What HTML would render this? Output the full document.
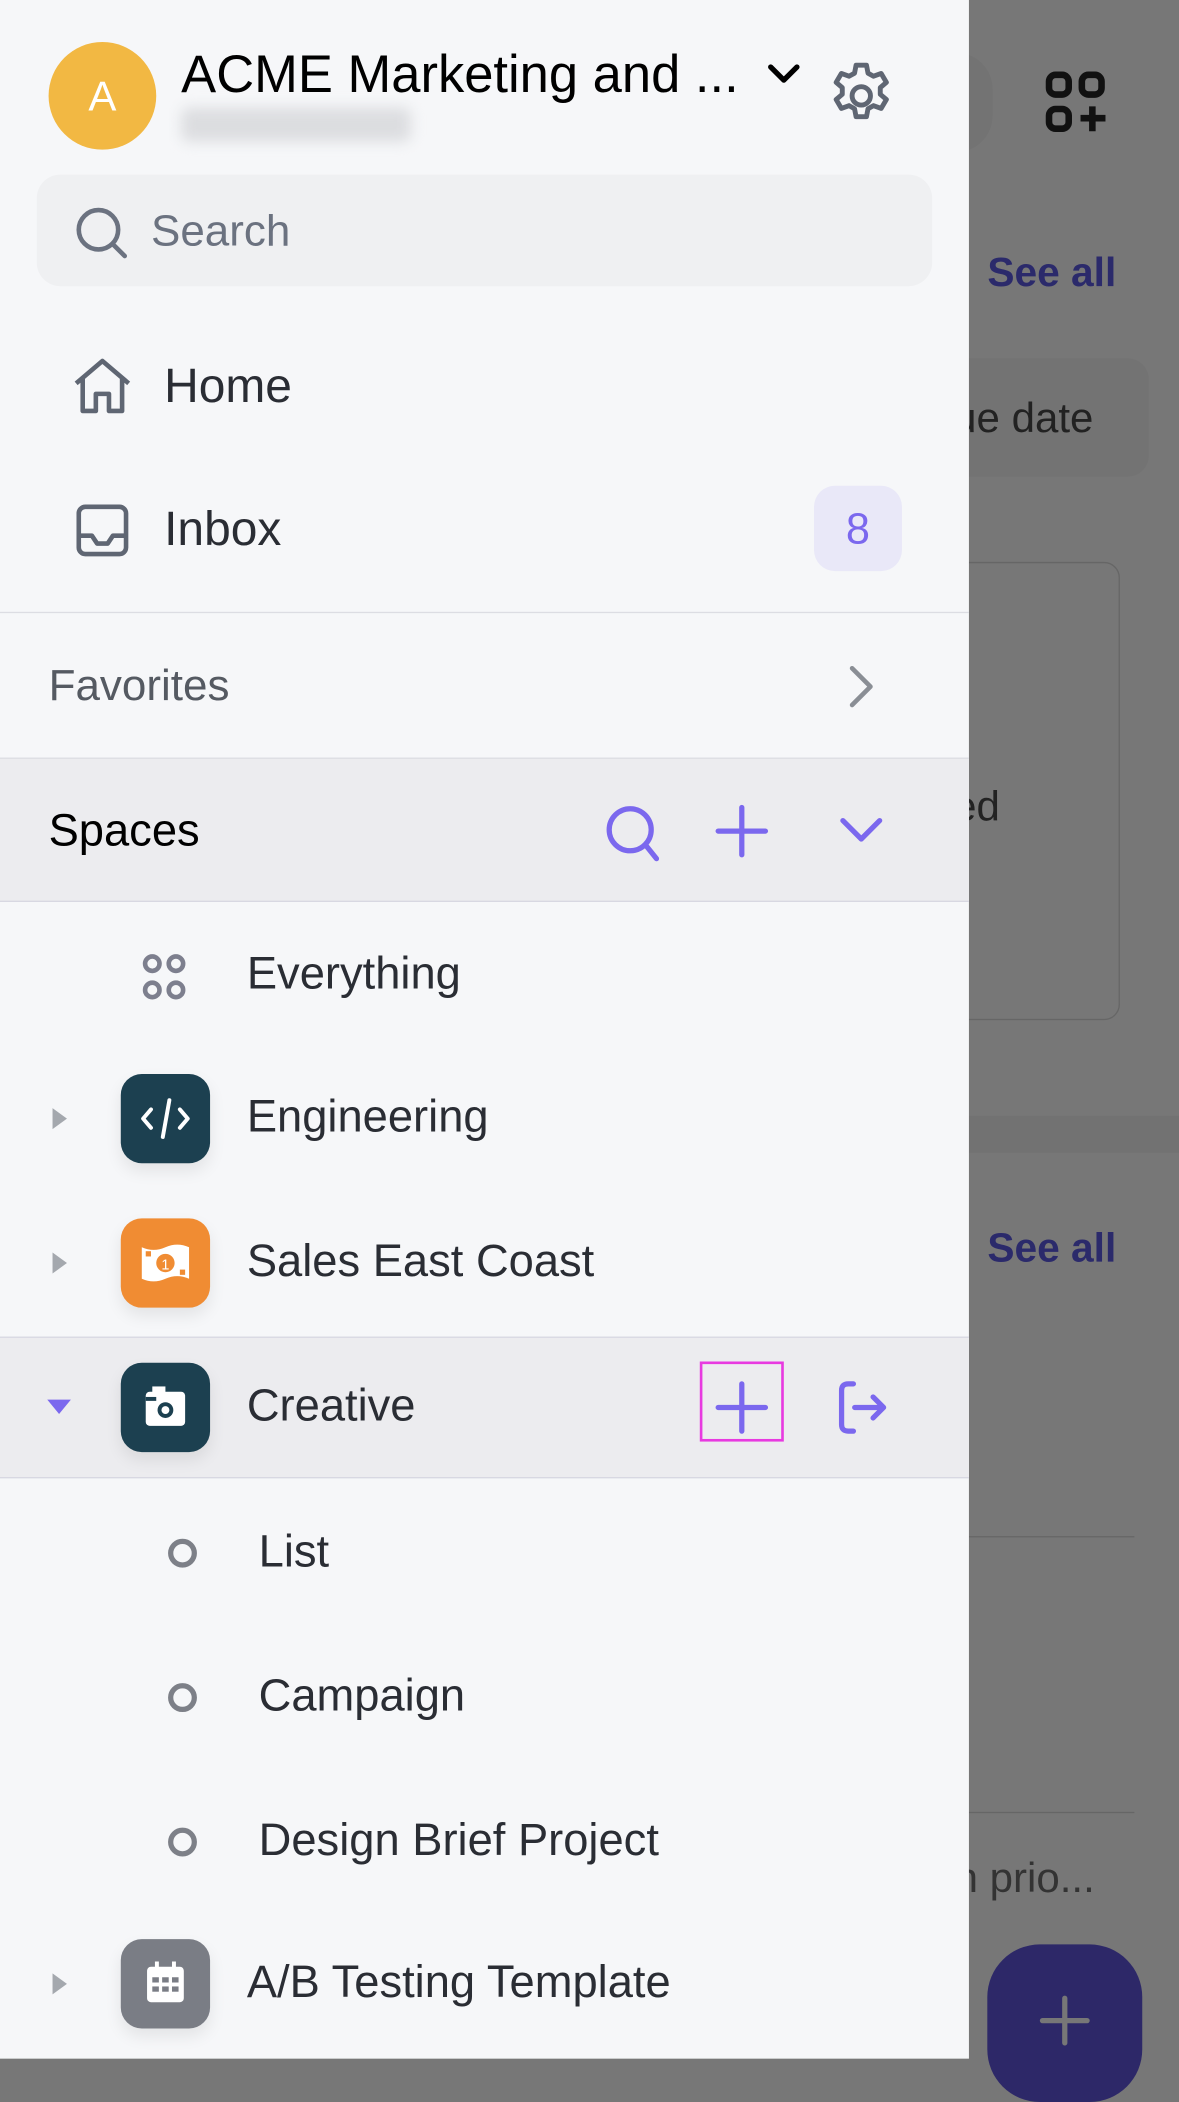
<!DOCTYPE html>
<html><head><meta charset="utf-8"><style>
html,body{margin:0;padding:0;width:1179px;height:2058px;overflow:hidden;background:#777}
#w{position:absolute;left:0;top:0;width:898px;height:1568px;transform:scale(1.31292);transform-origin:0 0;font-family:"Liberation Sans",sans-serif;}
.a{position:absolute}
.t{position:absolute;white-space:nowrap;color:#2a2d34;font-size:34.5px;line-height:1}
#d{position:absolute;left:0;top:0;width:738px;height:1568px;background:#f6f7f9}
.hl{position:absolute;left:0;width:738px;height:1px;background:#dcdde3}
.ib{position:absolute;width:68px;height:68px;border-radius:16px;box-shadow:0 6px 12px rgba(0,0,0,.08)}
.tri{position:absolute;width:0;height:0;border-top:8px solid transparent;border-bottom:8px solid transparent;border-left:11px solid #a4a8ae}
.dot{position:absolute;width:14px;height:14px;border:4px solid #7d8088;border-radius:50%}
</style></head><body><div id="w">
<div class="a" style="left:700px;top:40px;width:56px;height:76px;border-radius:38px;background:#737373"></div>
<svg class="a" style="left:796px;top:54px" width="50" height="48" viewBox="0 0 50 48" fill="none" stroke="#111" stroke-width="5"><rect x="3" y="3" width="15" height="15" rx="5"/><rect x="28" y="3" width="15" height="15" rx="5"/><rect x="3" y="29" width="15" height="15" rx="5"/><path d="M36 27v19M27 36h19"/></svg>
<div class="t" style="left:752px;top:192px;color:#2b2a6b;font-weight:bold;font-size:31px">See all</div>
<div class="a" style="left:700px;top:273px;width:175px;height:90px;border-radius:16px;background:#737373"></div>
<div class="t" style="left:726px;top:302px;color:#222;font-size:32px">ue date</div>
<div class="a" style="left:700px;top:428px;width:151px;height:347px;border-radius:12px;border:1.5px solid #666"></div>
<div class="t" style="left:726px;top:598px;color:#222;font-size:32px">ed</div>
<div class="a" style="left:738px;top:850px;width:160px;height:28px;background:#727272"></div>
<div class="t" style="left:752px;top:935px;color:#2b2a6b;font-weight:bold;font-size:31px">See all</div>
<div class="a" style="left:738px;top:1170px;width:126px;height:1px;background:#666"></div>
<div class="a" style="left:738px;top:1380px;width:126px;height:1px;background:#666"></div>
<div class="t" style="left:720px;top:1414px;color:#333;font-size:32px">in prio...</div>
<div class="a" style="left:752px;top:1481px;width:118px;height:120px;border-radius:40px;background:#2d2868"></div>
<svg class="a" style="left:790px;top:1518px" width="42" height="42" viewBox="0 0 42 42" stroke="#777" stroke-width="4" stroke-linecap="round"><path d="M21 4v34M4 21h34"/></svg>

<div id="d">
<div class="a" style="left:37px;top:32px;width:82px;height:82px;border-radius:50%;background:#f2b843;color:#fff;font-size:32px;text-align:center;line-height:82px">A</div>
<div class="t" style="left:138px;top:37px;color:#000;font-size:40px">ACME Marketing and ...</div>
<svg class="a" style="left:583px;top:46px" width="28" height="20" viewBox="0 0 28 20" fill="none" stroke="#000" stroke-width="4" stroke-linecap="round" stroke-linejoin="round"><path d="M4 5l10 10 10-10"/></svg>
<svg class="a" style="left:628px;top:45px" width="56" height="56" viewBox="0 0 24 24" fill="none" stroke="#5f6673" stroke-width="1.6" stroke-linejoin="round"><path d="M10.3 2h3.4l.5 2.6 1.8 1 2.5-.9 1.7 2.9-2 1.7v2.2l2 1.7-1.7 2.9-2.5-.9-1.8 1-.5 2.6h-3.4l-.5-2.6-1.8-1-2.5.9-1.7-2.9 2-1.7v-2.2l-2-1.7 1.7-2.9 2.5.9 1.8-1z"/><circle cx="12" cy="12" r="3"/></svg>
<div class="a" style="left:138px;top:82px;width:175px;height:26px;background:#dcdde0;filter:blur(5px);border-radius:6px"></div>

<div class="a" style="left:28px;top:133px;width:682px;height:85px;border-radius:18px;background:#eff0f2"></div>
<svg class="a" style="left:56px;top:156px" width="44" height="44" viewBox="0 0 44 44" fill="none" stroke="#6b7280" stroke-width="3.5" stroke-linecap="round"><circle cx="19" cy="19" r="15"/><path d="M30 30l9 9"/></svg>
<div class="t" style="left:115px;top:160px;color:#6b7280;font-size:33.5px">Search</div>

<svg class="a" style="left:55px;top:272px" width="46" height="44" viewBox="0 0 46 44" fill="none" stroke="#5f6673" stroke-width="3.5" stroke-linejoin="round"><path d="M3 20L23 3l20 17M8 16v25h10V28h10v13h10V16"/></svg>
<div class="t" style="left:125px;top:276px;font-size:36.5px">Home</div>
<svg class="a" style="left:58px;top:384px" width="40" height="40" viewBox="0 0 40 40" fill="none" stroke="#5f6673" stroke-width="3.5" stroke-linejoin="round"><rect x="2" y="2" width="36" height="36" rx="5"/><path d="M2 24h10l4 6h8l4-6h10"/></svg>
<div class="t" style="left:125px;top:385px;font-size:36.5px">Inbox</div>
<div class="a" style="left:620px;top:370px;width:67px;height:65px;border-radius:16px;background:#e9e8f8;color:#7b68ee;font-size:33px;text-align:center;line-height:65px">8</div>

<div class="hl" style="top:466px"></div>
<div class="t" style="left:37px;top:506px;color:#555a62;font-size:33.5px">Favorites</div>
<svg class="a" style="left:644px;top:505px" width="24" height="36" viewBox="0 0 24 36" fill="none" stroke="#8a8e95" stroke-width="3.5" stroke-linecap="round" stroke-linejoin="round"><path d="M5 4l14 14L5 32"/></svg>

<div class="a" style="left:0;top:577px;width:738px;height:110px;background:#ececef;border-top:1px solid #dcdde3;border-bottom:1px solid #d8d8e2;box-sizing:border-box"></div>
<div class="t" style="left:37px;top:616px;color:#000;font-size:34.5px">Spaces</div>
<svg class="a" style="left:460px;top:612px" width="46" height="46" viewBox="0 0 46 46" fill="none" stroke="#7b68ee" stroke-width="4" stroke-linecap="round"><circle cx="20" cy="20" r="16"/><path d="M32 32l8 10"/></svg>
<svg class="a" style="left:544px;top:612px" width="42" height="42" viewBox="0 0 42 42" stroke="#7b68ee" stroke-width="4" stroke-linecap="round"><path d="M21 3v36M3 21h36"/></svg>
<svg class="a" style="left:638px;top:620px" width="36" height="26" viewBox="0 0 36 26" fill="none" stroke="#7b68ee" stroke-width="4" stroke-linecap="round" stroke-linejoin="round"><path d="M4 5l14 14L32 5"/></svg>

<svg class="a" style="left:108px;top:726px" width="36" height="36" viewBox="0 0 36 36" fill="none" stroke="#7d7f8e" stroke-width="3.5"><circle cx="8" cy="8" r="5.5"/><circle cx="26" cy="8" r="5.5"/><circle cx="8" cy="28" r="5.5"/><circle cx="26" cy="28" r="5.5"/></svg>
<div class="t" style="left:188px;top:725px">Everything</div>

<div class="tri" style="left:40px;top:844px"></div>
<div class="ib" style="left:92px;top:818px;background:#1c4050"></div>
<svg class="a" style="left:104px;top:832px" width="44" height="40" viewBox="0 0 44 40" fill="none" stroke="#fff" stroke-width="3" stroke-linecap="round" stroke-linejoin="round"><path d="M11 13l-6 7 6 7M33 13l6 7-6 7M25 6l-5 28"/></svg>
<div class="t" style="left:188px;top:834px">Engineering</div>

<div class="tri" style="left:40px;top:954px"></div>
<div class="ib" style="left:92px;top:928px;background:#f08c33"></div>
<svg class="a" style="left:105px;top:944px" width="42" height="36" viewBox="0 0 42 36"><path d="M3 6q9 4 18 0t18 0v24q-9-4-18 0t-18 0z" fill="#fff"/><circle cx="21" cy="18" r="7" fill="#f08c33"/><text x="21" y="23" font-size="11" text-anchor="middle" fill="#fff" font-family="Liberation Sans">1</text><rect x="6" y="9" width="4" height="4" fill="#f08c33"/><rect x="32" y="23" width="4" height="4" fill="#f08c33"/></svg>
<div class="t" style="left:188px;top:944px">Sales East Coast</div>

<div class="a" style="left:0;top:1018px;width:738px;height:108px;background:#ececef;border-top:1px solid #d8d8e2;border-bottom:1px solid #d8d8e2;box-sizing:border-box"></div>
<div class="a" style="left:36px;top:1066px;width:0;height:0;border-left:9px solid transparent;border-right:9px solid transparent;border-top:11px solid #7b68ee"></div>
<div class="ib" style="left:92px;top:1038px;background:#1c4050"></div>
<svg class="a" style="left:108px;top:1054px" width="36" height="36" viewBox="0 0 36 36"><rect x="3" y="6" width="30" height="26" rx="3" fill="#fff"/><rect x="8" y="2" width="10" height="6" fill="#fff"/><circle cx="18" cy="20" r="6" fill="#1c4050"/><circle cx="18" cy="20" r="3" fill="#fff"/><rect x="3" y="10" width="8" height="3" fill="#1c4050"/></svg>
<div class="t" style="left:188px;top:1054px">Creative</div>
<div class="a" style="left:533px;top:1037px;width:64px;height:61px;border:2px solid #e83ae0;box-sizing:border-box"></div>
<svg class="a" style="left:544px;top:1051px" width="42" height="42" viewBox="0 0 42 42" stroke="#7b68ee" stroke-width="4" stroke-linecap="round"><path d="M21 3v36M3 21h36"/></svg>
<svg class="a" style="left:634px;top:1050px" width="44" height="44" viewBox="0 0 44 44" fill="none" stroke="#7b68ee" stroke-width="4" stroke-linecap="round" stroke-linejoin="round"><path d="M16 4h-4q-5 0-5 5v26q0 5 5 5h4"/><path d="M17 22h22M31 14l8 8-8 8"/></svg>

<div class="dot" style="left:128px;top:1172px"></div>
<div class="t" style="left:197px;top:1165px">List</div>
<div class="dot" style="left:128px;top:1282px"></div>
<div class="t" style="left:197px;top:1275px">Campaign</div>
<div class="dot" style="left:128px;top:1392px"></div>
<div class="t" style="left:197px;top:1385px">Design Brief Project</div>

<div class="tri" style="left:40px;top:1503px"></div>
<div class="ib" style="left:92px;top:1477px;background:#7a7d85"></div>
<svg class="a" style="left:110px;top:1493px" width="32" height="34" viewBox="0 0 32 34"><rect x="2" y="5" width="28" height="27" rx="3" fill="#fff"/><rect x="8" y="1" width="3" height="7" fill="#fff"/><rect x="21" y="1" width="3" height="7" fill="#fff"/><g fill="#7a7d85"><rect x="6" y="13" width="5" height="4"/><rect x="13.5" y="13" width="5" height="4"/><rect x="21" y="13" width="5" height="4"/><rect x="6" y="20" width="5" height="4"/><rect x="13.5" y="20" width="5" height="4"/><rect x="21" y="20" width="5" height="4"/></g></svg>
<div class="t" style="left:188px;top:1493px">A/B Testing Template</div>
</div>
</div></body></html>
